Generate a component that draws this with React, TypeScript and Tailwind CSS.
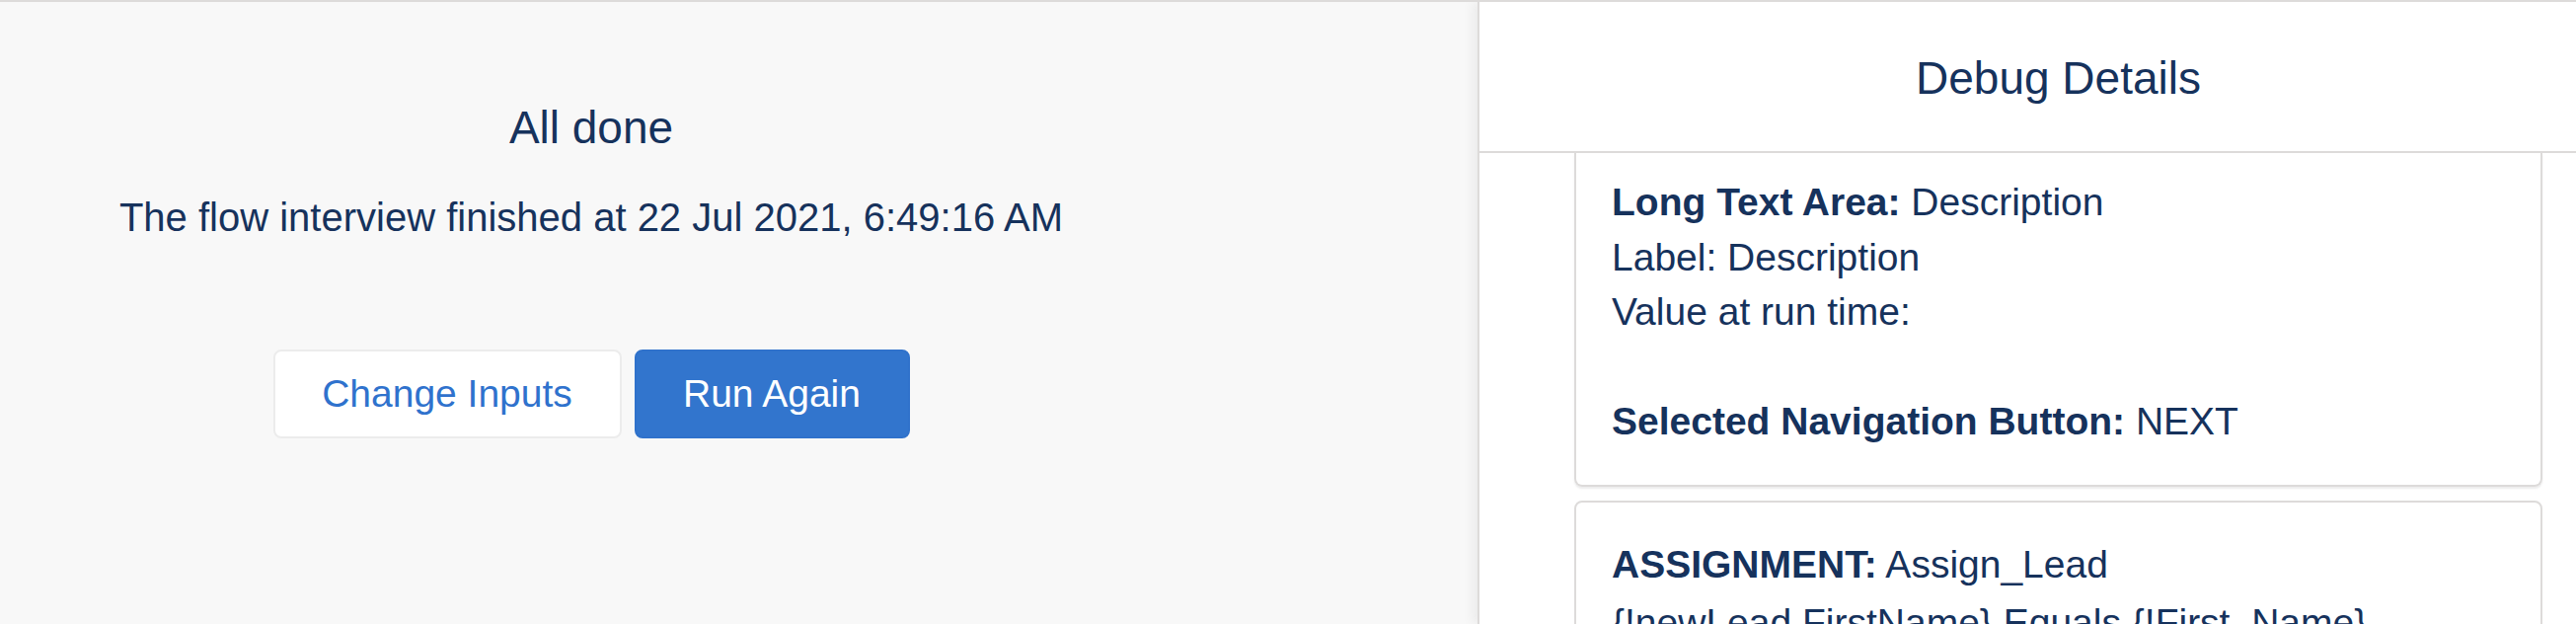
import React from "react";

const font = { fontFamily: '"Liberation Sans", Arial, sans-serif' };

export default function App() {
  return (
    <div
      className="w-[2610px] h-[632px] overflow-hidden flex border-t-2 border-[#dddbda] bg-[#f8f8f8] text-[#16325c]"
      style={font}
    >
      {/* Left: completion area */}
      <div className="w-[1497px] shrink-0 h-full">
        <div className="w-[1198px] flex flex-col items-center pt-[98px]">
          <div className="text-[46px] leading-[58px]">All done</div>
          <div className="mt-[32px] text-[40px] leading-[60px]">
            The flow interview finished at 22 Jul 2021, 6:49:16 AM
          </div>
          <div className="mt-[104px] flex gap-[13px]">
            <button className="w-[353px] h-[90px] rounded-[8px] bg-white border-2 border-[#ececec] text-[#2f72cd] text-[39px] flex items-center justify-center">
              Change Inputs
            </button>
            <button className="w-[279px] h-[90px] rounded-[8px] bg-[#3275cd] border-2 border-[#3072cb] text-white text-[39px] flex items-center justify-center">
              Run Again
            </button>
          </div>
        </div>
      </div>

      {/* Right: debug panel */}
      <div className="w-[1175px] shrink-0 h-full bg-white border-l-2 border-[#dddbda] shadow-[-6px_0_10px_rgba(0,0,0,0.05)] flex flex-col overflow-hidden">
        <div className="h-[153px] shrink-0 flex items-center justify-center border-b-2 border-[#dddbda] text-[46px] leading-[58px] pt-[2px]">
          Debug Details
        </div>
        <div className="px-[96px] flex flex-col">
          <div className="border-x-2 border-b-2 border-[#dddbda] rounded-b-[8px] shadow-[0_2px_2px_rgba(0,0,0,0.08)] px-[36px] pt-[22px] pb-[36px] text-[39px] leading-[55.5px]">
            <div>
              <span className="font-bold">Long Text Area:</span> Description
            </div>
            <div>Label: Description</div>
            <div>Value at run time:</div>
            <div>&nbsp;</div>
            <div>
              <span className="font-bold">Selected Navigation Button:</span> NEXT
            </div>
          </div>
          <div className="mt-[14px] border-2 border-[#dddbda] rounded-[8px] px-[36px] pt-[35px] pb-[38px] text-[39px] leading-[55.5px]">
            <div>
              <span className="font-bold">ASSIGNMENT:</span> Assign_Lead
            </div>
            <div className="mt-[4px]">{"{!newLead.FirstName} Equals {!First_Name}"}</div>
            <div>{"{!newLead.LastName} Equals {!Last_Name}"}</div>
            <div>{"{!newLead.Company} Equals {!Company}"}</div>
          </div>
        </div>
      </div>
    </div>
  );
}
